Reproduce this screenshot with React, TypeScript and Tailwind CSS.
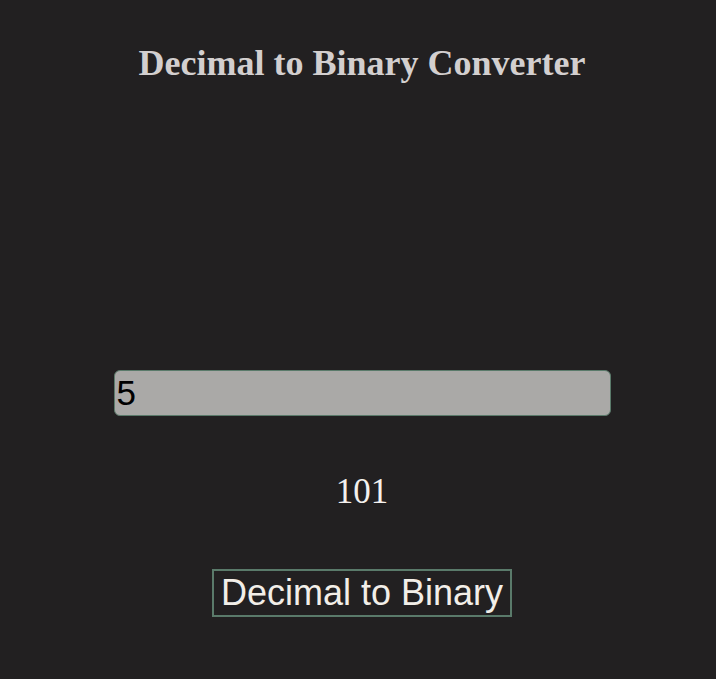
export default function App() {
  return (
    <div className="min-h-[679px] bg-[#222021] flex flex-col items-center pt-[40px] pl-[8px]">
      <h1 className="text-[36px] font-bold text-[#d3cfcf] leading-[46px] font-['Liberation_Serif',serif]">
        Decimal to Binary Converter
      </h1>
      <input
        type="text"
        defaultValue="5"
        className="mt-[284px] w-[497px] h-[46px] bg-[#aaa9a7] rounded-[6px] border border-[#5a7a6a] px-[2px] text-[35px] text-black outline-none font-['Liberation_Sans',sans-serif]"
      />
      <div className="mt-[56px] text-[35px] text-[#f4f1ee] leading-[40px] font-['Liberation_Serif',serif]">
        101
      </div>
      <button className="mt-[57px] border-2 border-[#5a7a6a] px-[7px] h-[48px] text-[36px] text-[#f2eee8] leading-[40px] font-['Liberation_Sans',sans-serif]">
        Decimal to Binary
      </button>
    </div>
  );
}
